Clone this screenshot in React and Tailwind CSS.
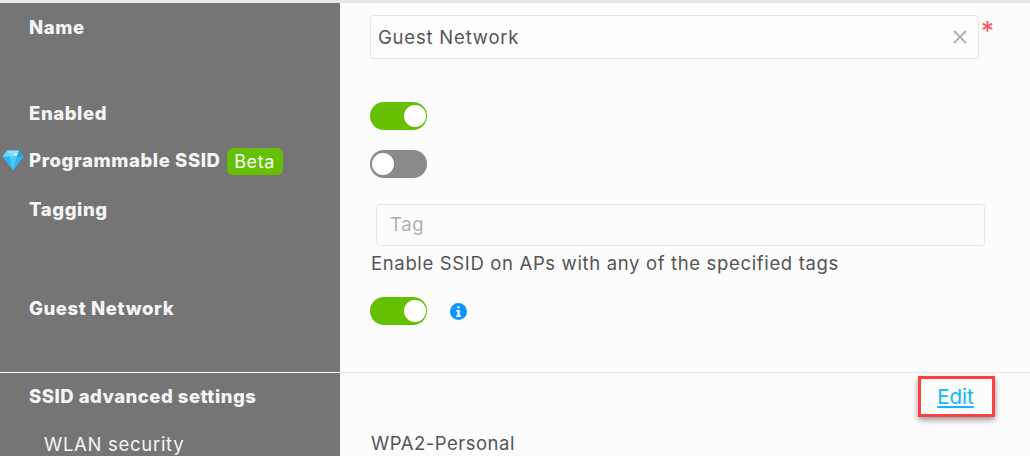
import React from 'react';

function Toggle({ on }) {
  return (
    <div className={`flex h-7 w-[57px] shrink-0 items-center rounded-full px-[2px] ${on ? 'justify-end bg-[#64c000] pr-px' : 'justify-start bg-[#8a8a8a]'}`}>
      <div className="h-[22px] w-[22px] rounded-full bg-white" />
    </div>
  );
}

function Diamond() {
  return (
    <svg width="22" height="21" viewBox="0 0 22 21">
      <path d="M5 0.5H17L21.5 6.5L11 20.5L0.5 6.5Z" fill="#2bb8f8" />
      <path d="M5 0.5L7.5 6.5H0.5Z" fill="#6fd4fb" />
      <path d="M17 0.5L14.5 6.5H21.5Z" fill="#1a9fe6" />
      <path d="M7.5 6.5H14.5L11 20.5Z" fill="#4ccafa" />
      <path d="M5 0.5H17L14.5 6.5H7.5Z" fill="#8fe0fd" />
      <path d="M14 2.5L14.6 4L16 4.5L14.6 5L14 6.5L13.4 5L12 4.5L13.4 4Z" fill="#ffffff" />
    </svg>
  );
}

function Row({ label, height, top, children, icon, badge }) {
  return (
    <div className="flex" style={{ height }}>
      <div className="relative w-[340px] shrink-0 bg-[#757575] pl-[29px] pt-[13px]">
        <div className="flex h-6 items-center text-[18.5px] font-extrabold tracking-[0.6px] text-[#f5f5f5]">
          {icon && <span className="absolute left-[2px] top-[14px] flex"><Diamond /></span>}
          <span>{label}</span>
          {badge && <span className="ml-[6px] flex h-[27px] w-[56px] items-center justify-center rounded-md bg-[#64c000] text-[18px] font-normal tracking-[0.6px] text-white">{badge}</span>}
        </div>
      </div>
      <div className="flex-1 bg-[#fcfcfc]" style={{ paddingTop: top }}>
        {children}
      </div>
    </div>
  );
}

export default function App() {
  return (
    <div className="h-[456px] w-[1030px] overflow-hidden bg-[#fcfcfc] font-['Inter',sans-serif]">
      <div className="h-[3px] bg-[#e6e6e6]" />
      <Row label="Name" height={86} top={12}>
        <div className="ml-[30px] flex items-start">
          <div className="flex h-[44px] w-[609px] items-center justify-between rounded border border-[#e6e6e6] bg-[#fdfdfd] pl-[7px] pr-[9px] text-[18.5px] tracking-[0.8px] text-[#555555]">
            <span className="pt-[2px]">Guest Network</span>
            <svg width="18" height="18" viewBox="0 0 18 18" fill="none" stroke="#b4b4b4" strokeWidth="2"><path d="M3 3L15 15M15 3L3 15" /></svg>
          </div>
          <span className="ml-[2px] mt-[3px] text-[26px] leading-none text-[#ff4d5e]">*</span>
        </div>
      </Row>
      <Row label="Enabled" height={47} top={13}>
        <div className="ml-[30px]"><Toggle on /></div>
      </Row>
      <Row label="Programmable SSID" height={49} top={14} icon badge="Beta">
        <div className="ml-[30px]"><Toggle /></div>
      </Row>
      <Row label="Tagging" height={99} top={19}>
        <div className="ml-[36px] flex h-[42px] w-[609px] items-center rounded border border-[#e6e6e6] pl-[13px] text-[18.5px] tracking-[0.6px] text-[#b0b0b0]">Tag</div>
        <div className="ml-[31px] mt-[5px] text-[18.5px] leading-[24px] tracking-[0.65px] text-[#555555]">Enable SSID on APs with any of the specified tags</div>
      </Row>
      <Row label="Guest Network" height={88} top={13}>
        <div className="ml-[30px] flex items-center gap-[23px]">
          <Toggle on />
          <svg width="17" height="17" viewBox="0 0 17 17">
            <circle cx="8.5" cy="8.5" r="8.5" fill="#0b97ff" />
            <rect x="7.2" y="3" width="2.6" height="2.6" rx="1.3" fill="#ffffff" />
            <path d="M6.2 7H9.8V12.4H11V14H6.2V12.4H7.4V8.6H6.2Z" fill="#ffffff" />
          </svg>
        </div>
      </Row>
      <div className="flex h-px">
        <div className="w-[340px] bg-white" />
        <div className="flex-1 bg-[#e6e6e6]" />
      </div>
      <div className="flex h-[83px]">
        <div className="w-[340px] shrink-0 bg-[#757575] pt-[11px] pl-[29px]">
          <div className="h-6 text-[18.5px] font-extrabold leading-6 tracking-[0.5px] text-[#f5f5f5]">SSID advanced settings</div>
          <div className="ml-[15px] mt-6 text-[18.5px] leading-6 tracking-[0.7px] text-[#f5f5f5]">WLAN security</div>
        </div>
        <div className="flex-1 bg-[#fcfcfc] pt-[3px]">
          <div className="flex justify-end pr-[35px]">
            <div className="flex h-[41px] w-[77px] items-center justify-center border-[3px] border-[#ff4040] shadow-[0_3px_6px_rgba(0,0,0,0.4)]">
              <a className="mr-[2px] text-[20.5px] leading-6 text-[#12b5ff] underline">Edit</a>
            </div>
          </div>
          <div className="ml-[31px] mt-[14px] text-[18.5px] leading-6 tracking-[0.5px] text-[#555555]">WPA2-Personal</div>
        </div>
      </div>
    </div>
  );
}
